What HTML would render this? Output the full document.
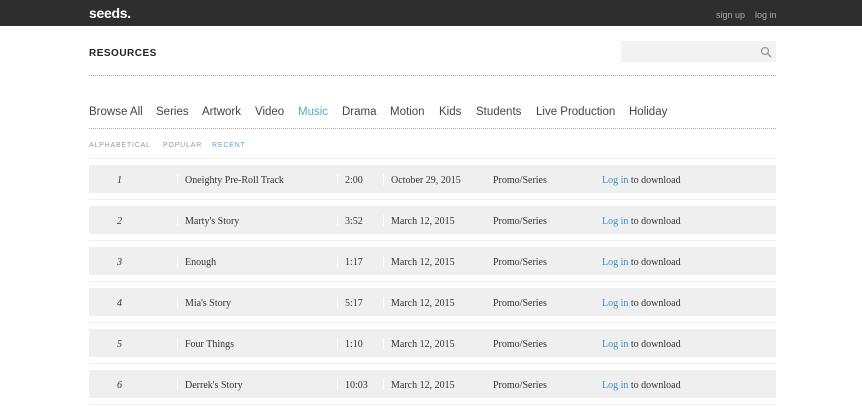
<!DOCTYPE html>
<html><head><style>
body{margin:0;width:862px;height:407px;background:#fff;font-family:"Liberation Sans",sans-serif;overflow:hidden;position:relative}
.top{position:absolute;left:0;top:0;width:862px;height:26px;background:#2e2e2e}
.logo{position:absolute;left:89px;top:5px;color:#fff;font-weight:bold;font-size:14px;letter-spacing:-0.3px}
.tr{position:absolute;top:10px;font-size:9px;color:#aaa}
.res{position:absolute;left:89px;top:48px;font-size:10px;font-weight:bold;color:#222;letter-spacing:0.5px}
.search{position:absolute;left:621px;top:41px;width:155px;height:21px;background:#f2f2f2}
.dot{position:absolute;left:89px;width:687px;border-top:1px dotted #aaa}
.nav{position:absolute;top:106px;font-size:11.5px;color:#444}
.nav span{position:absolute;white-space:nowrap}
.sort{position:absolute;top:142px;font-size:7px;letter-spacing:0.8px;color:#999}
.row{position:absolute;left:89px;width:687px;height:28px;background:#efefef;font-family:"Liberation Serif",serif;font-size:10px;color:#333}
.row span{position:absolute;top:10px;white-space:nowrap}
.sep{position:absolute;top:9px;width:1px;height:11px;background:#fff}
.ln{position:absolute;left:89px;width:687px;height:1px;background:#f0f0f0}
a{color:#3a8fc4;text-decoration:none}
</style></head><body>
<div class="top"><div class="logo">seeds.</div><div class="tr" style="left:716px">sign up</div><div class="tr" style="left:755px">log in</div></div>
<div class="res">RESOURCES</div>
<div class="search"><svg width="12" height="12" style="position:absolute;left:139px;top:5px" viewBox="0 0 12 12"><circle cx="5" cy="5" r="3.5" fill="none" stroke="#999" stroke-width="1.3"/><line x1="7.5" y1="7.5" x2="11" y2="11" stroke="#999" stroke-width="1.5"/></svg></div>
<div class="dot" style="top:75px"></div>
<div class="nav"><span style="left:89px">Browse All</span><span style="left:156px">Series</span><span style="left:202px">Artwork</span><span style="left:255px">Video</span><span style="left:298px;color:#5aa7cf">Music</span><span style="left:342px">Drama</span><span style="left:390px">Motion</span><span style="left:439px">Kids</span><span style="left:476px">Students</span><span style="left:536px">Live Production</span><span style="left:629px">Holiday</span></div>
<div class="dot" style="top:128px"></div>
<div class="sort" style="left:89px">ALPHABETICAL</div><div class="sort" style="left:163px">POPULAR</div><div class="sort" style="left:212px;color:#5aa7cf">RECENT</div>
<div class="ln" style="top:158px"></div>
<div class="row" style="top:165px"><span style="left:28px;font-style:italic">1</span><div class="sep" style="left:88px"></div><span style="left:96px">Oneighty Pre-Roll Track</span><div class="sep" style="left:248px"></div><span style="left:256px">2:00</span><div class="sep" style="left:294px"></div><span style="left:302px">October 29, 2015</span><span style="left:404px">Promo/Series</span><span style="left:513px"><a>Log in</a> to download</span></div>
<div class="ln" style="top:199px"></div>
<div class="row" style="top:206px"><span style="left:28px;font-style:italic">2</span><div class="sep" style="left:88px"></div><span style="left:96px">Marty's Story</span><div class="sep" style="left:248px"></div><span style="left:256px">3:52</span><div class="sep" style="left:294px"></div><span style="left:302px">March 12, 2015</span><span style="left:404px">Promo/Series</span><span style="left:513px"><a>Log in</a> to download</span></div>
<div class="ln" style="top:240px"></div>
<div class="row" style="top:247px"><span style="left:28px;font-style:italic">3</span><div class="sep" style="left:88px"></div><span style="left:96px">Enough</span><div class="sep" style="left:248px"></div><span style="left:256px">1:17</span><div class="sep" style="left:294px"></div><span style="left:302px">March 12, 2015</span><span style="left:404px">Promo/Series</span><span style="left:513px"><a>Log in</a> to download</span></div>
<div class="ln" style="top:281px"></div>
<div class="row" style="top:288px"><span style="left:28px;font-style:italic">4</span><div class="sep" style="left:88px"></div><span style="left:96px">Mia's Story</span><div class="sep" style="left:248px"></div><span style="left:256px">5:17</span><div class="sep" style="left:294px"></div><span style="left:302px">March 12, 2015</span><span style="left:404px">Promo/Series</span><span style="left:513px"><a>Log in</a> to download</span></div>
<div class="ln" style="top:322px"></div>
<div class="row" style="top:329px"><span style="left:28px;font-style:italic">5</span><div class="sep" style="left:88px"></div><span style="left:96px">Four Things</span><div class="sep" style="left:248px"></div><span style="left:256px">1:10</span><div class="sep" style="left:294px"></div><span style="left:302px">March 12, 2015</span><span style="left:404px">Promo/Series</span><span style="left:513px"><a>Log in</a> to download</span></div>
<div class="ln" style="top:363px"></div>
<div class="row" style="top:370px"><span style="left:28px;font-style:italic">6</span><div class="sep" style="left:88px"></div><span style="left:96px">Derrek's Story</span><div class="sep" style="left:248px"></div><span style="left:256px">10:03</span><div class="sep" style="left:294px"></div><span style="left:302px">March 12, 2015</span><span style="left:404px">Promo/Series</span><span style="left:513px"><a>Log in</a> to download</span></div>
<div class="ln" style="top:404px"></div>
</body></html>
